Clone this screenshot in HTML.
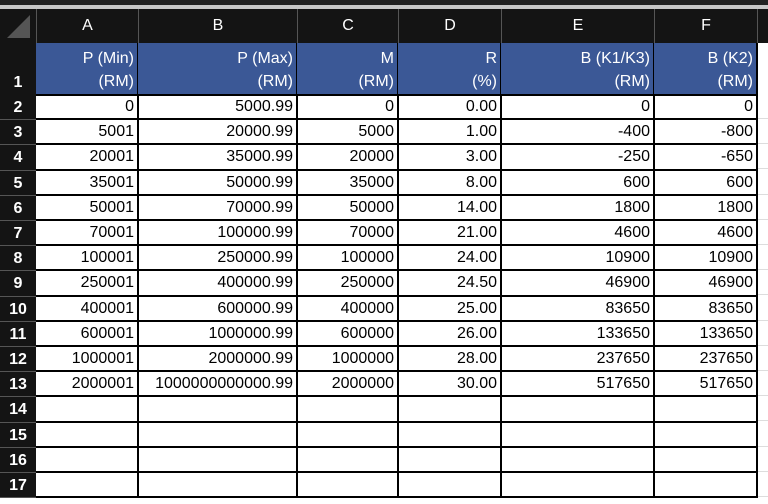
<html><head><style>
body{margin:0;width:768px;height:504px;overflow:hidden;background:#fff;font-family:"Liberation Sans",sans-serif;position:relative}
.top{position:absolute;left:0;top:0;width:768px;height:5px;background:#222}
.top2{position:absolute;left:0;top:5px;width:768px;height:4px;background:#c8c8c8}
.hdr{position:absolute;top:9px;height:34px;background:#141414;color:#fff;font-size:16px;text-align:center;line-height:34px;border-left:1px solid #555;box-sizing:border-box}
.rh{position:absolute;left:0;width:36px;background:#141414;color:#fff;font-size:16px;font-weight:bold;text-align:center;box-sizing:border-box;border-bottom:1px solid #555}
.c{position:absolute;box-sizing:border-box;border-right:2px solid #000;border-bottom:2px solid #000;font-size:16px;text-align:right;padding-right:3px;color:#000;white-space:nowrap}
.b{background:#3b5896;color:#fff;line-height:23px;padding-top:4px;border-bottom:2px solid #000}
</style></head><body>
<div class="top"></div><div class="top2"></div>
<div class="hdr" style="left:0;width:36px;border-left:0"><svg width="36" height="34"><polygon points="30,6 30,29 7,29" fill="#555"/></svg></div>
<div class="hdr" style="left:36px;width:102px">A</div>
<div class="hdr" style="left:138px;width:159px">B</div>
<div class="hdr" style="left:297px;width:101px">C</div>
<div class="hdr" style="left:398px;width:103px">D</div>
<div class="hdr" style="left:501px;width:153px">E</div>
<div class="hdr" style="left:654px;width:103px">F</div>
<div class="hdr" style="left:757px;width:11px"></div>
<div id="g"></div>
<script>
var L=[36,138,297,398,501,654,757];
var h=['P (Min)<br>(RM)','P (Max)<br>(RM)','M<br>(RM)','R<br>(%)','B (K1/K3)<br>(RM)','B (K2)<br>(RM)'];
var d=[['0','5000.99','0','0.00','0','0'],['5001','20000.99','5000','1.00','-400','-800'],['20001','35000.99','20000','3.00','-250','-650'],['35001','50000.99','35000','8.00','600','600'],['50001','70000.99','50000','14.00','1800','1800'],['70001','100000.99','70000','21.00','4600','4600'],['100001','250000.99','100000','24.00','10900','10900'],['250001','400000.99','250000','24.50','46900','46900'],['400001','600000.99','400000','25.00','83650','83650'],['600001','1000000.99','600000','26.00','133650','133650'],['1000001','2000000.99','2000000','28.00','237650','237650'],['2000001','1000000000000.99','2000000','30.00','517650','517650']];
d[10][2]='1000000';
var s='';
s+='<div class="rh" style="top:43px;height:53px;line-height:80px">1</div>';
for(var i=0;i<6;i++)s+='<div class="c b" style="left:'+L[i]+'px;top:43px;width:'+(L[i+1]-L[i]+1)+'px;height:53px">'+h[i]+'</div>';
for(var r=0;r<16;r++){var t=95+r*25.2;
s+='<div class="rh" style="top:'+t+'px;height:25.2px;line-height:26px">'+(r+2)+'</div>';
for(var i=0;i<6;i++){var v=r<12?d[r][i]:'';s+='<div class="c" style="left:'+L[i]+'px;top:'+t+'px;width:'+(L[i+1]-L[i]+1)+'px;height:25.2px;line-height:24px'+(i==0?';border-left:0':'')+'">'+v+'</div>';}
s+='<div style="position:absolute;left:758px;top:'+(t+23)+'px;width:10px;height:1px;background:#ddd"></div>';}
document.getElementById('g').innerHTML=s;
</script>
</body></html>
